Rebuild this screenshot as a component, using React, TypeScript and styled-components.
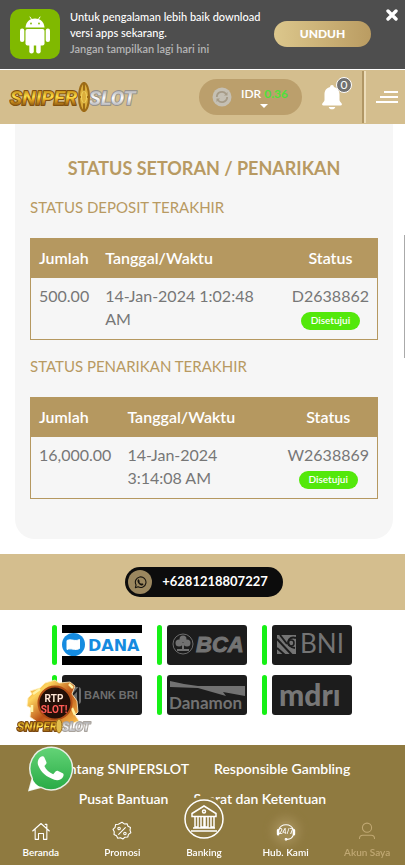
import React from "react";
import styled, { createGlobalStyle } from "styled-components";

const GlobalStyle = createGlobalStyle`
  *, *::before, *::after { box-sizing: border-box; }
  body {
    margin: 0;
    background: #fff;
    color: #777;
    font-family: Lato, "Open Sans", sans-serif;
    font-size: 16px;
    line-height: 23px;
  }
  button { font: inherit; color: inherit; border: 0; padding: 0; background: none; cursor: pointer; }
  a { color: inherit; text-decoration: none; }
  svg { display: block; flex: none; }
`;

const TopArea = styled.div`
  position: sticky;
  top: 0;
  z-index: 5;
`;

const AppBanner = styled.aside`
  display: flex;
  align-items: flex-start;
  height: 69px;
  padding: 9px 7px 0 10px;
  background: #4e4e4e;
  color: #fff;
  font-size: 11px;
  line-height: 16px;
`;

const BannerText = styled.div`
  display: flex;
  flex-direction: column;
  align-items: flex-start;
  flex: 1;
  padding-left: 10px;
  font-weight: 500;
`;

const DismissToday = styled.button`
  color: #b4b4b4;
  font-weight: 600;
`;

const DownloadButton = styled.button`
  width: 97px;
  height: 26px;
  margin: 12px 15px 0 0;
  border-radius: 13px;
  background: linear-gradient(90deg, #dcc78c, #ba9c62);
  color: #fff;
  font-size: 12px;
  font-weight: 900;
  line-height: 24px;
`;

const Header = styled.header`
  display: flex;
  align-items: center;
  height: 55px;
  padding-left: 9px;
  border-top: 1px solid #fff;
  background: #d4be8e;
`;

const LogoLink = styled.a`
  margin-right: auto;
`;

const Wallet = styled.div`
  display: flex;
  align-items: center;
  width: 103px;
  height: 36px;
  padding-left: 13px;
  border-radius: 18px;
  background: #bb9f6c;
`;

const BalanceButton = styled.button`
  display: flex;
  flex-direction: column;
  align-items: center;
  gap: 3px;
  padding-left: 9px;
  color: #fff;
  font-size: 12px;
  font-weight: 600;
  line-height: 14px;
`;

const Amount = styled.span`
  color: #4fe03a;
  font-weight: 700;
`;

const BellButton = styled.button`
  position: relative;
  margin: 0 19px;
`;

const Badge = styled.span`
  position: absolute;
  top: -8px;
  right: -9px;
  width: 16px;
  height: 16px;
  border: 1px solid #fff;
  border-radius: 8px;
  background: #717171;
  color: #fff;
  font-size: 12px;
  line-height: 14px;
  text-align: center;
`;

const MenuButton = styled.button`
  display: flex;
  align-items: center;
  justify-content: flex-end;
  width: 43px;
  height: 52px;
  padding-right: 7px;
  border-left: 2px solid #b09664;
  box-shadow: inset 2px 0 #ecdcb8;
`;

const Panel = styled.main`
  margin: 0 12px 15px 15px;
  padding: 33px 15px 25px;
  border-radius: 0 0 20px 20px;
  background: #f6f6f6;
`;

const Title = styled.h1`
  margin: 0 0 16px;
  color: #b89a62;
  font-size: 18px;
  font-weight: 700;
  line-height: 23px;
  text-align: center;
`;

const Subtitle = styled.h2`
  margin: 0 0 19px;
  color: #b89a62;
  font-size: 15px;
  font-weight: 400;
  line-height: 23px;
`;

const StatusTable = styled.table`
  width: 100%;
  margin-bottom: 15px;
  border: 1px solid #b59860;
  border-collapse: separate;
  border-spacing: 0;
`;

const HeadCell = styled.th<{ $center?: boolean }>`
  padding: 7px 8px 9px;
  background: #b59860;
  color: #fff;
  font-weight: 600;
  line-height: 23px;
  text-align: ${(p) => (p.$center ? "center" : "left")};
`;

const Cell = styled.td<{ $center?: boolean }>`
  padding: 6px 8px 9px;
  vertical-align: top;
  text-align: ${(p) => (p.$center ? "center" : "left")};
`;

const StatusPill = styled.span`
  display: block;
  width: 59px;
  height: 18px;
  margin: 5px auto 0;
  border-radius: 9px;
  background: #53e80b;
  color: #fff;
  font-size: 10px;
  font-weight: 600;
  line-height: 17px;
`;

const ContactBar = styled.section`
  display: flex;
  justify-content: center;
  padding: 13px 0;
  background: #d4be8e;
`;

const PhoneLink = styled.a`
  display: flex;
  align-items: center;
  gap: 10px;
  height: 30px;
  margin-left: 3px;
  padding: 0 15px 2px 3px;
  border-radius: 15px;
  background: #0c0c0c;
  color: #fff;
  font-size: 13px;
  font-weight: 700;
`;

const PhoneIcon = styled.span`
  display: grid;
  place-items: center;
  width: 24px;
  height: 24px;
  margin-top: 2px;
  border-radius: 12px;
  background: #9b875f;
`;

const Banks = styled.ul`
  display: grid;
  grid-template-columns: repeat(3, 90px);
  justify-content: center;
  gap: 10px 15px;
  margin: 0;
  padding: 15px 2px 30px 0;
  list-style: none;
`;

const Bank = styled.li`
  display: flex;
  gap: 5px;
  &::before {
    content: "";
    width: 5px;
    height: 40px;
    border-radius: 3px;
    background: #16f016;
  }
`;

const BankLogo = styled.svg<{ $square?: boolean }>`
  width: 80px;
  height: 40px;
  border-radius: ${(p) => (p.$square ? 0 : 3)}px;
  background: #1c1c1c;
`;

const Footer = styled.footer`
  min-height: 120px;
  padding: 9px 0 51px;
  background: #8f7a40;
`;

const FooterLinks = styled.nav`
  display: flex;
  flex-wrap: wrap;
  justify-content: center;
  max-width: 360px;
  margin: 0 auto;
  column-gap: 25px;
  color: #fff;
  font-size: 14px;
  font-weight: 600;
  line-height: 30px;
`;

const BottomNav = styled.nav`
  position: fixed;
  right: -3px;
  bottom: 0;
  left: 0;
  z-index: 6;
  display: flex;
  align-items: flex-end;
  height: 50px;
  padding-bottom: 6px;
  background: #8f7a40;
`;

const NavItem = styled.a<{ $muted?: boolean }>`
  display: flex;
  flex: 1;
  flex-direction: column;
  align-items: center;
  gap: 4px;
  color: ${(p) => (p.$muted ? "#c0a873" : "#fff")};
  font-size: 10px;
  font-weight: 600;
  line-height: 14px;
`;

const NavDisc = styled.span`
  display: grid;
  place-items: center;
  width: 46px;
  height: 46px;
  margin-bottom: -1px;
  border-radius: 23px;
  background: #8f7a40;
`;

const SupportGlow = styled.span`
  border-radius: 50%;
  background: #a08b54;
  box-shadow: 0 0 8px 4px #a08b54;
`;

const ChatFloat = styled.a`
  position: fixed;
  bottom: 70px;
  left: 27px;
  z-index: 7;
`;

const RtpFloat = styled.a`
  position: fixed;
  bottom: 129px;
  left: 15px;
  z-index: 7;
`;

const ScrollThumb = styled.div`
  position: fixed;
  top: 235px;
  right: 0;
  width: 1px;
  height: 123px;
  background: #aaa;
`;

const AndroidIcon = () => (
  <svg width="50" height="50" viewBox="0 0 50 50" aria-hidden="true">
    <rect width="50" height="50" rx="10" fill="#80b900" />
    <g fill="#fff">
      <path d="M15.500 18.500C16 12.500 20 9.500 25 9.500s9 3 9.500 9z" />
      <rect x="15.500" y="20" width="19" height="16.500" rx="2" />
      <rect x="10" y="19.500" width="4.300" height="13.500" rx="2.100" />
      <rect x="35.700" y="19.500" width="4.300" height="13.500" rx="2.100" />
      <rect x="19.300" y="33" width="4.500" height="11.500" rx="2.200" />
      <rect x="26.200" y="33" width="4.500" height="11.500" rx="2.200" />
    </g>
    <path d="M20 8l2 3M30 8l-2 3" stroke="#fff" strokeLinecap="round" />
    <circle cx="21" cy="14.500" r="0.900" fill="#80b900" />
    <circle cx="29" cy="14.500" r="0.900" fill="#80b900" />
  </svg>
);

const CloseIcon = () => (
  <svg width="12" height="12" viewBox="0 0 12 12" aria-hidden="true">
    <path d="M2 2l8 8M10 2l-8 8" stroke="#fff" strokeWidth="3.400" strokeLinecap="round" />
  </svg>
);

const SniperLogo = () => (
  <svg width="132" height="36" viewBox="0 0 132 36" role="img" aria-label="SNIPER SLOT">
    <defs>
      <linearGradient id="gold" x1="0" y1="0" x2="0" y2="1">
        <stop offset="0.150" stopColor="#b9800f" />
        <stop offset="0.450" stopColor="#ffe04a" />
        <stop offset="0.600" stopColor="#d99c20" />
        <stop offset="0.900" stopColor="#70400c" />
      </linearGradient>
      <linearGradient id="silver" x1="0" y1="0" x2="0" y2="1">
        <stop offset="0.200" stopColor="#b4b4b6" />
        <stop offset="0.500" stopColor="#fff" />
        <stop offset="0.800" stopColor="#b8b8bc" />
      </linearGradient>
    </defs>
    <g
      fontFamily="Roboto, sans-serif"
      fontSize="20"
      fontWeight="700"
      fontStyle="italic"
      strokeWidth="2"
      strokeLinejoin="round"
      paintOrder="stroke"
    >
      <text x="1" y="26" fill="url(#gold)" stroke="#80500f">SNIPER</text>
      <text x="80" y="26" fill="url(#silver)" stroke="#97928b">SLOT</text>
    </g>
    <g fill="none" stroke="#9d6b16" strokeWidth="2">
      <ellipse cx="75" cy="18" rx="5" ry="14" fill="#dcae3b" />
      <path d="M75 3v10M75 23v10M70 18h3M77 18h3" />
      <ellipse cx="75" cy="18" rx="2.500" ry="6" stroke="#f1d462" strokeWidth="1" />
    </g>
  </svg>
);

const RefreshIcon = () => (
  <svg width="20" height="20" viewBox="0 0 20 20" aria-hidden="true">
    <circle cx="10" cy="10" r="9.500" fill="#c5c0b4" />
    <g fill="none" stroke="#a69b87" strokeWidth="1.800">
      <path d="M4.800 10a5.200 5.200 0 0 1 9.200-3.200M15.200 10a5.200 5.200 0 0 1-9.200 3.200" />
    </g>
    <path d="M15.500 5v3.500H12zM4.500 15v-3.500H8z" fill="#a69b87" />
  </svg>
);

const BellIcon = () => (
  <svg width="22" height="25" viewBox="0 0 22 25" aria-hidden="true">
    <path
      fill="#fff"
      d="M11 0c1.200 0 1.900.8 1.900 2 3.600.8 5.600 3.600 5.600 7.300v5.500c0 1.500.8 2.300 2 3.400.8.800.4 2.300-.9 2.300H2.400c-1.300 0-1.700-1.500-.9-2.300 1.200-1.100 2-1.900 2-3.400V9.300C3.500 5.600 5.500 2.800 9.100 2 9.100.8 9.800 0 11 0zM7.700 22h6.600c-.4 1.500-1.600 2.300-3.300 2.300S8.100 23.500 7.700 22z"
    />
  </svg>
);

const WhatsAppGlyph = ({ size, color }: { size: number; color: string }) => (
  <svg width={size} height={size} viewBox="0 0 24 24" fill="none" stroke={color} strokeWidth="2" aria-hidden="true">
    <path d="M2.500 21.500l1.400-5A9.800 9.800 0 1 1 7.500 20z" strokeLinejoin="round" />
    <path
      fill={color}
      stroke="none"
      d="M8.900 6.500c-.3-.5-.9-.5-1.300-.1-2.300 2.400-.9 5.400 1.200 7.700 2.300 2.500 5.600 4.400 7.800 2.600.8-.6.900-1.500.7-2.100l-2.400-1.200c-.5-.2-.8.2-1.500 1-.9-.2-3.200-2-3.700-3.300.7-.9 1-1.200.8-1.700z"
    />
  </svg>
);

const ChatIcon = () => (
  <svg width="50" height="50" viewBox="0 0 50 50" aria-hidden="true">
    <defs>
      <linearGradient id="chat" x1="0" y1="0" x2="0" y2="1">
        <stop stopColor="#64d477" />
        <stop offset="1" stopColor="#27aa45" />
      </linearGradient>
    </defs>
    <path
      fill="url(#chat)"
      stroke="#e8eee4"
      strokeWidth="1.500"
      d="M2 45.500l3.300-12A21.300 21.300 0 1 1 14 42.300z"
    />
    <path fill="#fff" d="M2 45.500l3.300-12c1.500 4 4.500 7.200 8.700 8.800z" />
    <path
      fill="#fff"
      d="M13.500 12c1.400-1.300 3.200-1 3.900.5l2 4.600c.5 1.300-.2 2-2 4 1.600 3.800 5 6.800 8.800 8.200l2.600-3c.7-.8 1.500-.8 2.300-.4l4.600 2.300c1.200.6 1.100 2 .4 3.600-1.300 3-5.300 4-8.800 2.900-7.700-2.300-13.300-7.500-15.800-13.600-1.600-3.800-.5-7 2-9.100z"
    />
  </svg>
);

const RtpIcon = () => (
  <svg width="78" height="58" viewBox="0 0 78 58" role="img" aria-label="RTP SLOT SNIPER SLOT">
    <defs>
      <linearGradient id="fire" x1="0" y1="0" x2="1" y2="1">
        <stop stopColor="#e38a32" />
        <stop offset="0.250" stopColor="#fdd35d" />
        <stop offset="0.550" stopColor="#bd5416" />
        <stop offset="1" stopColor="#ffca52" />
      </linearGradient>
    </defs>
    <path
      fill="url(#fire)"
      stroke="#fff0c4"
      strokeWidth="0.800"
      d="M15 13l10-3 5-5 10-3 4 3 11-1 5 4-3 8 5 7 1 11-3 3 4 6-6 2-3 3H20l1-5-6-4 1-9-4-2 1-8 4-4z"
    />
    <path d="M18 16l7-5M54 6l4 4M57 30l3 7M17 27v7" stroke="#fff3a5" strokeWidth="2.500" />
    <circle cx="40" cy="25" r="16.500" fill="#241008" stroke="#b14e16" strokeWidth="2" />
    <g fontFamily="Roboto, sans-serif" fontWeight="700" textAnchor="middle">
      <text x="39" y="24" fontSize="10" fill="#ffe6d5">RTP</text>
      <text x="39" y="35" fontSize="10" fill="#ff5b55">SLOT!</text>
    </g>
    <g
      fontFamily="Roboto, sans-serif"
      fontSize="12"
      fontWeight="700"
      fontStyle="italic"
      strokeWidth="2"
      strokeLinejoin="round"
      paintOrder="stroke"
    >
      <text x="2" y="53" fill="url(#gold)" stroke="#7a4710">SNIPER</text>
      <text x="47" y="53" fill="url(#silver)" stroke="#a9a39c">SLOT</text>
    </g>
    <ellipse cx="44" cy="48" rx="3" ry="7" fill="#e3bd4c" stroke="#a0701c" />
  </svg>
);

const BottomIcon = ({ children }: { children: React.ReactNode }) => (
  <svg
    width="20"
    height="20"
    viewBox="0 0 24 24"
    fill="none"
    stroke="currentColor"
    strokeWidth="1.300"
    strokeLinecap="round"
    strokeLinejoin="round"
    aria-hidden="true"
  >
    {children}
  </svg>
);

const rows = [
  { title: "STATUS DEPOSIT TERAKHIR", amount: "500.00", time: "14-Jan-2024 1:02:48 AM", id: "D2638862" },
  { title: "STATUS PENARIKAN TERAKHIR", amount: "16,000.00", time: "14-Jan-2024 3:14:08 AM", id: "W2638869" },
];

export default function App() {
  return (
    <>
      <GlobalStyle />
      <TopArea>
        <AppBanner>
          <AndroidIcon />
          <BannerText>
            <span>
              Untuk pengalaman lebih baik download
              <br />
              versi apps sekarang.
            </span>
            <DismissToday>Jangan tampilkan lagi hari ini</DismissToday>
          </BannerText>
          <DownloadButton>UNDUH</DownloadButton>
          <button aria-label="Tutup">
            <CloseIcon />
          </button>
        </AppBanner>
        <Header>
          <LogoLink href="#">
            <SniperLogo />
          </LogoLink>
          <Wallet>
            <button aria-label="Muat ulang saldo">
              <RefreshIcon />
            </button>
            <BalanceButton>
              <span>
                IDR <Amount>0.36</Amount>
              </span>
              <svg width="8" height="4" viewBox="0 0 8 4" aria-hidden="true">
                <path d="M0 0h8L4 4z" fill="#fff" />
              </svg>
            </BalanceButton>
          </Wallet>
          <BellButton aria-label="Notifikasi">
            <BellIcon />
            <Badge>0</Badge>
          </BellButton>
          <MenuButton aria-label="Menu">
            <svg width="22" height="12" viewBox="0 0 22 12" aria-hidden="true">
              <path d="M8 1h14M4 6h18M0 11h22" stroke="#fff" strokeWidth="2" />
            </svg>
          </MenuButton>
        </Header>
      </TopArea>

      <Panel>
        <Title>STATUS SETORAN / PENARIKAN</Title>
        {rows.map((row) => (
          <section key={row.id}>
            <Subtitle>{row.title}</Subtitle>
            <StatusTable>
              <thead>
                <tr>
                  <HeadCell>Jumlah</HeadCell>
                  <HeadCell>Tanggal/Waktu</HeadCell>
                  <HeadCell $center>Status</HeadCell>
                </tr>
              </thead>
              <tbody>
                <tr>
                  <Cell>{row.amount}</Cell>
                  <Cell>{row.time}</Cell>
                  <Cell $center>
                    {row.id}
                    <StatusPill>Disetujui</StatusPill>
                  </Cell>
                </tr>
              </tbody>
            </StatusTable>
          </section>
        ))}
      </Panel>

      <ContactBar>
        <PhoneLink href="tel:+6281218807227">
          <PhoneIcon>
            <WhatsAppGlyph size={13} color="#16130e" />
          </PhoneIcon>
          +6281218807227
        </PhoneLink>
      </ContactBar>

      <Banks>
        <Bank>
          <BankLogo $square viewBox="0 0 80 40" role="img" aria-label="DANA">
            <rect width="80" height="40" fill="#000" />
            <rect y="8" width="80" height="23" fill="#fff" />
            <circle cx="11.500" cy="19.500" r="11.500" fill="#158be0" />
            <path d="M5 15.500c4-2 8 1.500 12.500-1v9c-4.500 2.500-8.500-1-12.500 1z" fill="#fff" stroke="#fff" strokeLinejoin="round" />
            <text x="26" y="26" fill="#158be0" fontFamily="'DejaVu Sans', sans-serif" fontSize="16" fontWeight="700">DANA</text>
          </BankLogo>
        </Bank>
        <Bank>
          <BankLogo viewBox="0 0 80 40" role="img" aria-label="BCA">
            <circle cx="16" cy="19" r="10" fill="none" stroke="#6c6c6c" />
            <g fill="#717171">
              <circle cx="16" cy="14" r="3.500" />
              <circle cx="12" cy="18" r="3.500" />
              <circle cx="20" cy="18" r="3.500" />
              <path d="M15 18h2v6h5v2H10v-2h5z" />
            </g>
            <text x="29" y="27" fill="#737373" stroke="#737373" fontFamily="'Liberation Sans', sans-serif" fontSize="22" fontWeight="700" fontStyle="italic">BCA</text>
          </BankLogo>
        </Bank>
        <Bank>
          <BankLogo viewBox="0 0 80 40" role="img" aria-label="BNI">
            <rect x="5" y="10" width="19" height="19" fill="#747474" />
            <path d="M5 14l15 16M8 10l7 9M24 13c-9-3-11 9-1 10M5 23l8 7" fill="none" stroke="#1c1c1c" strokeWidth="2" />
            <circle cx="19" cy="18" r="3" fill="none" stroke="#1c1c1c" strokeWidth="1.500" />
            <text x="28" y="28" fill="#747474" fontFamily="Lato, sans-serif" fontSize="26">BNI</text>
          </BankLogo>
        </Bank>
        <Bank>
          <BankLogo viewBox="0 0 80 40" role="img" aria-label="BANK BRI">
            <rect x="2" y="12" width="17" height="17" rx="3" fill="#6c6c6c" />
            <path d="M7 12v12l9-10v15" fill="none" stroke="#1c1c1c" strokeWidth="2" />
            <text x="22" y="24" fill="#6e6e6e" fontFamily="'Liberation Sans', sans-serif" fontSize="11" fontWeight="700">BANK BRI</text>
          </BankLogo>
        </Bank>
        <Bank>
          <BankLogo viewBox="0 0 80 40" role="img" aria-label="Danamon">
            <path d="M3 6l14 3 14 2h47v10L56 17l3 4-28-8-28-1z" fill="#727272" />
            <text x="2" y="34" fill="#727272" fontFamily="Lato, sans-serif" fontSize="17" fontWeight="700">Danamon</text>
          </BankLogo>
        </Bank>
        <Bank>
          <BankLogo viewBox="0 0 80 40" role="img" aria-label="mdri">
            <text x="7" y="31" fill="#777" fontFamily="Lato, sans-serif" fontSize="30" fontWeight="900">mdrı</text>
          </BankLogo>
        </Bank>
      </Banks>

      <Footer>
        <FooterLinks>
          <a href="#tentang">Tentang SNIPERSLOT</a>
          <a href="#responsible">Responsible Gambling</a>
          <a href="#bantuan">Pusat Bantuan</a>
          <a href="#syarat">Syarat dan Ketentuan</a>
        </FooterLinks>
      </Footer>

      <RtpFloat href="#rtp">
        <RtpIcon />
      </RtpFloat>
      <ChatFloat href="#chat" aria-label="WhatsApp">
        <ChatIcon />
      </ChatFloat>

      <BottomNav>
        <NavItem href="#beranda">
          <BottomIcon>
            <path d="M2 12L12 3l10 9M5 10v12h4v-7h6v7h4V10M17 4h2v4" />
          </BottomIcon>
          Beranda
        </NavItem>
        <NavItem href="#promosi">
          <BottomIcon>
            <path d="M12 1.500l2.700 2 3.300-.3 1.200 3.100 3 1.500-.6 3.200 1 3.100-2.800 1.900-.9 3.200-3.300.2-2.500 2.200-2.900-1.600-3.300.6-1.500-3-3-1.300.3-3.300-1.500-3L3.700 7.600l.6-3.300 3.300-.5z" />
            <path d="M8 16l8-8" />
            <circle cx="8.500" cy="9" r="1.500" />
            <circle cx="15.500" cy="15" r="1.500" />
          </BottomIcon>
          Promosi
        </NavItem>
        <NavItem href="#banking">
          <NavDisc>
            <svg width="40" height="40" viewBox="0 0 40 40" fill="none" stroke="#fff" strokeWidth="1.500" aria-hidden="true">
              <circle cx="20" cy="20" r="19" />
              <path d="M8 14.500L20 7l12 7.500v3H8zM9 29h22M7 32h26M11 18v10h3V18M17 18v10h3V18M21 18v10h3V18M27 18v10h3V18" />
              <circle cx="20" cy="12.500" r="1.500" />
            </svg>
          </NavDisc>
          Banking
        </NavItem>
        <NavItem href="#kontak">
          <SupportGlow>
            <BottomIcon>
              <path d="M3 11a9.500 9.500 0 0 1 18 0M21 16c-1 4-4 6-8 6" />
              <path d="M2.500 11v5M21.500 11v5" strokeWidth="3" />
              <circle cx="12" cy="22" r="1" />
              <text x="12" y="16" textAnchor="middle" fill="#fff" stroke="none" fontSize="8" fontWeight="700">24/7</text>
            </BottomIcon>
          </SupportGlow>
          Hub. Kami
        </NavItem>
        <NavItem href="#akun" $muted>
          <BottomIcon>
            <circle cx="12" cy="8" r="5.500" />
            <path d="M3 21c0-3 1.500-4 4-4h10c2.500 0 4 1 4 4" />
          </BottomIcon>
          Akun Saya
        </NavItem>
      </BottomNav>
      <ScrollThumb />
    </>
  );
}
